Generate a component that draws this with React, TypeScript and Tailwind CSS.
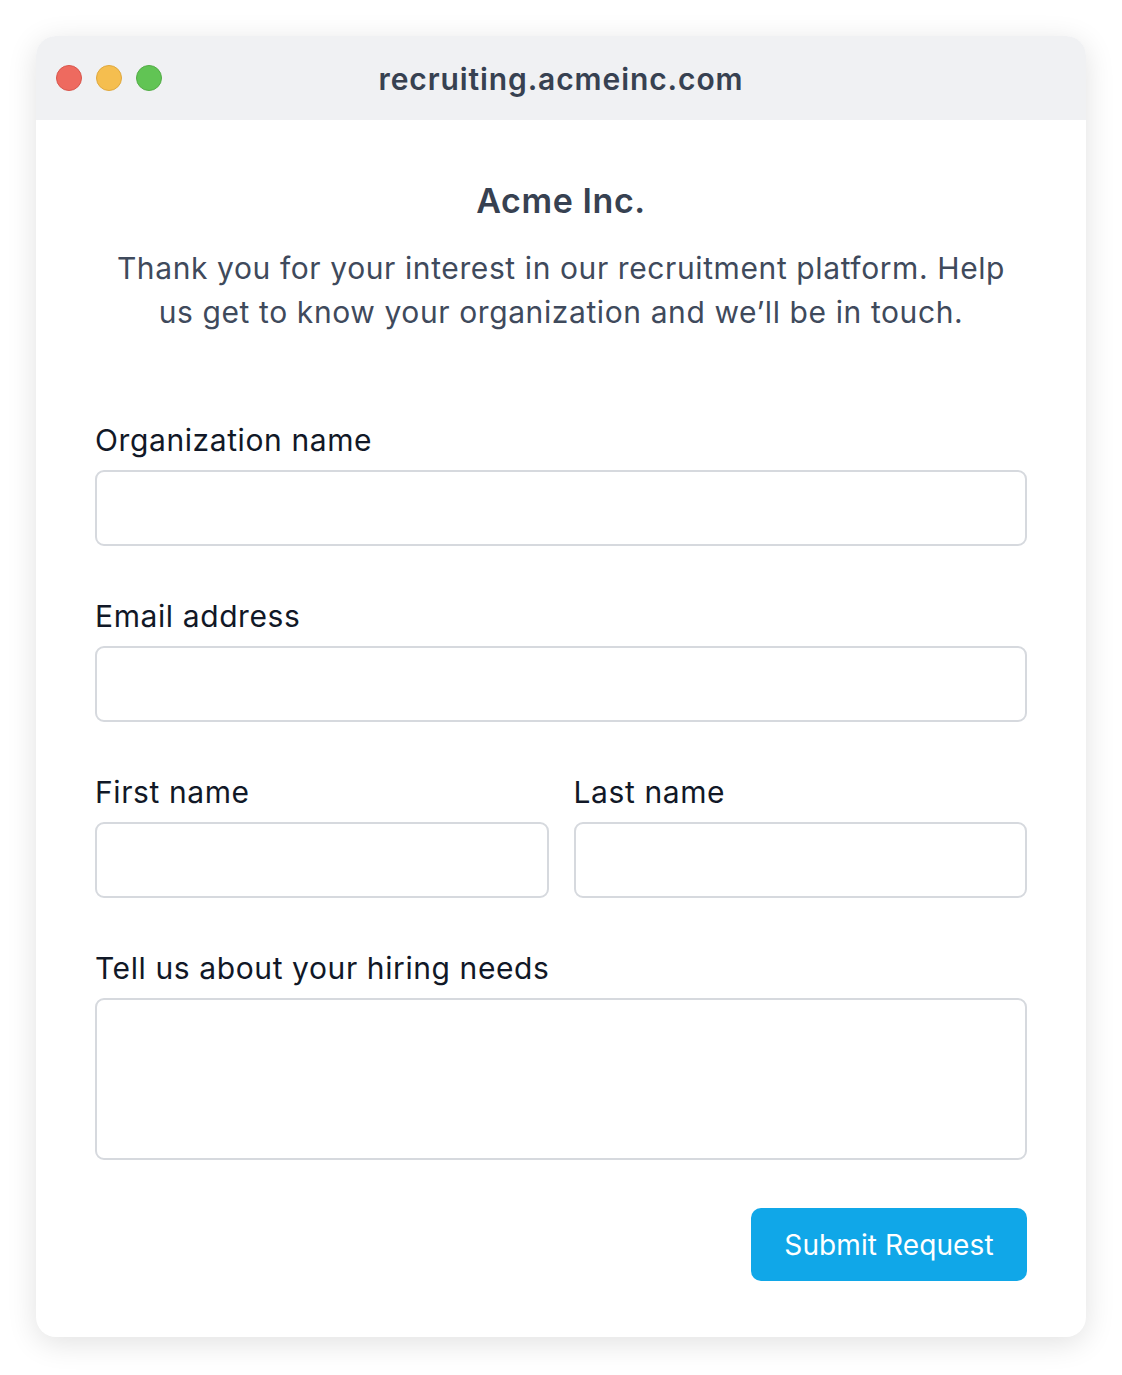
import React from 'react';

const font = { fontFamily: 'Inter, "Noto Sans", sans-serif' };

function Field({ label, tall }: { label: string; tall?: boolean }) {
  return (
    <label className="flex flex-col gap-3">
      <span className="text-[30px] leading-[36px] tracking-[0.6px] text-[#111827]">{label}</span>
      {tall ? (
        <textarea className="h-[162px] w-full resize-none rounded-[9px] border-2 border-[#d6d9de] bg-white outline-none" />
      ) : (
        <input className="h-[76px] w-full rounded-[9px] border-2 border-[#d6d9de] bg-white outline-none" />
      )}
    </label>
  );
}

export default function App() {
  return (
    <div className="min-h-screen bg-white p-[36px] pb-[37px]" style={font}>
      <div className="w-[1050px] overflow-hidden rounded-[20px] bg-white shadow-[0_6px_30px_rgba(0,0,0,0.12)]">
        <div className="grid h-[84px] grid-cols-[1fr_auto_1fr] items-center bg-[#f0f1f3] px-5">
          <div className="flex gap-[14px]">
            <span className="h-[26px] w-[26px] rounded-full border border-[#d9554b] bg-[#ee6a5f]" />
            <span className="h-[26px] w-[26px] rounded-full border border-[#e0a83c] bg-[#f5be4f]" />
            <span className="h-[26px] w-[26px] rounded-full border border-[#52ac45] bg-[#61c454]" />
          </div>
          <div className="pt-[2px] text-[30px] font-semibold tracking-[0.9px] text-[#374151]">recruiting.acmeinc.com</div>
          <div />
        </div>

        <div className="px-[59px] pt-[60px] pb-[56px]">
          <h1 className="text-center text-[34px] leading-[42px] font-semibold tracking-[0.6px] text-[#374151]">Acme Inc.</h1>
          <p className="mt-6 px-[10px] text-center text-[30px] leading-[44px] tracking-[0.6px] text-[#3f4a5c]">
            Thank you for your interest in our recruitment platform. Help us get to know your organization and we’ll be in touch.
          </p>

          <form className="mt-[88px] flex flex-col gap-[52px]">
            <Field label="Organization name" />
            <Field label="Email address" />
            <div className="grid grid-cols-2 gap-[25px]">
              <Field label="First name" />
              <Field label="Last name" />
            </div>
            <Field label="Tell us about your hiring needs" tall />
          </form>

          <div className="mt-12 flex justify-end">
            <button className="h-[73px] w-[276px] rounded-[10px] bg-[#10a7e8] text-[28px] font-normal tracking-[0.1px] text-white">
              Submit Request
            </button>
          </div>
        </div>
      </div>
    </div>
  );
}
